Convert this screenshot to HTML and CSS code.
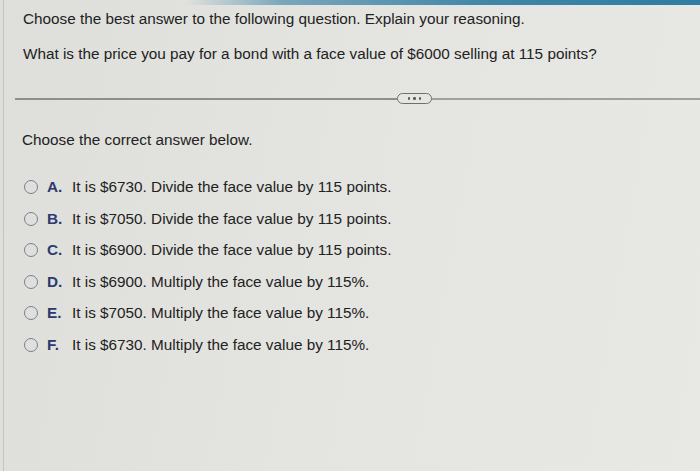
FILE: index.html
```html
<!DOCTYPE html>
<html>
<head>
<meta charset="utf-8">
<link rel="stylesheet" href="styles.css">
</head>
<body>
<div class="page">
  <div class="topbar"></div>
  <div class="question">
    <p class="q1">Choose the best answer to the following question. Explain your reasoning.</p>
    <p class="q2">What is the price you pay for a bond with a face value of $6000 selling at 115 points?</p>
  </div>
  <div class="divider">
    <span class="rule rule-left"></span>
    <span class="more"><span class="dot"></span><span class="dot"></span><span class="dot"></span></span>
    <span class="rule rule-right"></span>
  </div>
  <p class="prompt">Choose the correct answer below.</p>
  <ul class="options">
    <li class="option"><span class="radio"></span><span class="letter">A.</span><span class="text">It is $6730. Divide the face value by 115 points.</span></li>
    <li class="option"><span class="radio"></span><span class="letter">B.</span><span class="text">It is $7050. Divide the face value by 115 points.</span></li>
    <li class="option"><span class="radio"></span><span class="letter">C.</span><span class="text">It is $6900. Divide the face value by 115 points.</span></li>
    <li class="option"><span class="radio"></span><span class="letter">D.</span><span class="text">It is $6900. Multiply the face value by 115%.</span></li>
    <li class="option"><span class="radio"></span><span class="letter">E.</span><span class="text">It is $7050. Multiply the face value by 115%.</span></li>
    <li class="option"><span class="radio"></span><span class="letter">F.</span><span class="text">It is $6730. Multiply the face value by 115%.</span></li>
  </ul>
</div>
</body>
</html>
```

FILE: styles.css
```css
html, body {
  margin: 0;
  padding: 0;
  height: 100%;
}
body {
  background: linear-gradient(100deg, #dedfdb 0%, #e4e4e0 50%, #e8e8e4 100%);
  font-family: "Liberation Sans", Arial, sans-serif;
  font-size: 15.3px;
  color: #222222;
  overflow: hidden;
}
.page {
  margin-left: 3px;
  border-left: 1px solid #c6c6c0;
  height: 100%;
  box-sizing: border-box;
}
.topbar {
  height: 5px;
  background: linear-gradient(90deg, rgba(80,140,170,0) 0%, rgba(80,140,170,0) 26%, #7aa6bb 40%, #3f86a7 70%, #2f7da2 100%);
}
.question {
  padding-left: 19px;
}
.q1, .q2, .prompt {
  margin: 0;
  line-height: 20px;
}
.q1 {
  margin-top: 4px;
}
.q2 {
  margin-top: 15px;
}
.divider {
  display: flex;
  align-items: center;
  margin-top: 29px;
  padding-left: 11px;
}
.rule {
  height: 2px;
  background: #8e8e8b;
}
.rule-left {
  width: 382px;
}
.rule-right {
  flex: 1;
  background: #a0a09d;
}
.more {
  width: 33px;
  height: 9px;
  border: 1.5px solid #6f6f6f;
  border-radius: 6px;
  display: flex;
  align-items: center;
  justify-content: center;
  gap: 3px;
  background: #e6e6e2;
}
.dot {
  width: 2.5px;
  height: 2.5px;
  border-radius: 50%;
  background: #5a5a5a;
}
.prompt {
  margin-top: 26px;
  padding-left: 18px;
}
.options {
  list-style: none;
  margin: 27px 0 0 0;
  padding: 0 0 0 20px;
  display: flex;
  flex-direction: column;
  gap: 11.5px;
}
.option {
  display: flex;
  align-items: center;
  line-height: 20px;
}
.radio {
  width: 12px;
  height: 12px;
  border: 1.7px solid #7b7f95;
  border-radius: 50%;
  flex: none;
}
.letter {
  font-weight: bold;
  color: #2c3a6e;
  margin-left: 9px;
  width: 25px;
}
.text {
  color: #222222;
}
```
